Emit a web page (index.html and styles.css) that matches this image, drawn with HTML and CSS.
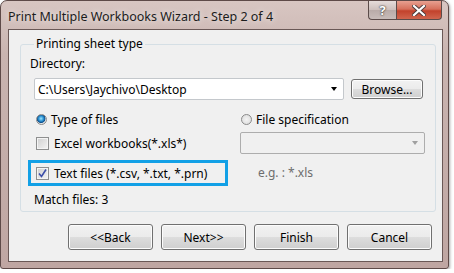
FILE: index.html
```html
<!DOCTYPE html>
<html lang="en">
<head>
  <meta charset="UTF-8">
  <title>Print Multiple Workbooks Wizard</title>
  <link rel="stylesheet" href="styles.css">
</head>
<body>
  <div class="window">
    <!-- Title bar -->
    <div class="titlebar">
      <span class="title">Print Multiple Workbooks Wizard - Step 2 of 4</span>
      <div class="caption-btns">
        <span class="cap-btn help">?</span>
        <span class="cap-btn close">
          <svg width="14" height="11" viewBox="0 0 14 11">
            <path d="M2 1 L12 10 M12 1 L2 10" stroke="#4a3a3a" stroke-width="4" stroke-linecap="square"/>
            <path d="M2 1 L12 10 M12 1 L2 10" stroke="#ffffff" stroke-width="2.2" stroke-linecap="square"/>
          </svg>
        </span>
      </div>
    </div>

    <!-- Client area -->
    <div class="client">
      <fieldset class="group">
        <legend>Printing sheet type</legend>
        <div class="label">Directory:</div>
        <div class="dir-row">
          <div class="combo">
            <span>C:\Users\Jaychivo\Desktop</span>
            <span class="arrow"></span>
          </div>
          <button class="btn browse">Browse...</button>
        </div>

        <div class="options">
          <label class="opt"><span class="radio checked"></span>Type of files</label>
          <label class="opt right"><span class="radio"></span>File specification</label>

          <label class="opt"><span class="check"></span>Excel workbooks(*.xls*)</label>
          <div class="combo disabled"><span class="fill"></span><span class="arrow"></span></div>

          <label class="opt highlight"><span class="check">
            <svg width="11" height="11" viewBox="0 0 11 11"><path d="M2 5.5 L4.5 8.5 L9 1.5" fill="none" stroke="#3c4ea8" stroke-width="1.6"/></svg>
          </span>Text files (*.csv, *.txt, *.prn)</label>
          <div class="hint">e.g. : *.xls</div>
        </div>

        <div class="match">Match files: 3</div>
      </fieldset>

      <div class="footer">
        <button class="btn">&lt;&lt;Back</button>
        <button class="btn">Next&gt;&gt;</button>
        <button class="btn">Finish</button>
        <button class="btn">Cancel</button>
      </div>
    </div>
  </div>
</body>
</html>
```

FILE: styles.css
```css
body {
  margin: 0;
  background: #ffffff;
  font-family: 'Noto Sans', 'Open Sans', sans-serif;
  font-size: 12px;
  color: #000;
}

.window {
  width: 449px;
  height: 269px;
  box-sizing: border-box;
  padding: 0 5px 6px 7px;
  border: 1px solid #5e4a48;
  border-radius: 7px 7px 3px 3px;
  background: linear-gradient(180deg, #d8c6c2 0%, #c9b4b0 20%, #bfa6a2 100%);
  box-shadow: 1px 1px 3px rgba(0, 0, 0, 0.35);
  display: flex;
  flex-direction: column;
}

.titlebar {
  height: 28px;
  display: flex;
  justify-content: space-between;
  align-items: flex-start;
}

.title {
  margin-top: 9px;
  line-height: 14px;
  font-size: 12.5px;
  color: #1c1c1c;
  text-shadow: 0 0 6px rgba(255, 255, 255, 0.9);
}

.caption-btns {
  display: flex;
  margin-right: 1px;
}

.cap-btn {
  height: 18px;
  border: 1px solid #5b4b49;
  border-top: none;
  display: flex;
  align-items: center;
  justify-content: center;
}

.help {
  width: 27px;
  border-radius: 0 0 0 4px;
  border-right: none;
  background: linear-gradient(180deg, #e6dcda 0%, #cdbfbc 50%, #b9aba8 51%, #c8bcb9 100%);
  color: #fff;
  font-weight: bold;
  font-size: 13px;
  text-shadow: 0 0 2px #333, 0 0 1px #333;
}

.close {
  width: 44px;
  border-radius: 0 0 4px 0;
  background: linear-gradient(180deg, #e8a090 0%, #d6705c 45%, #c2422c 55%, #d0654e 100%);
}

.client {
  flex: 1;
  border: 1px solid #6a5856;
  background: #f0f0f0;
  padding: 6px 11px 0 11px;
  display: flex;
  flex-direction: column;
}

.group {
  margin: 0;
  padding: 0 9px 5px 9px;
  border: 1px solid #d5dfe5;
  border-radius: 3px;
  height: 176px;
  box-sizing: border-box;
}

.group legend {
  padding: 0 2px;
  margin-left: 4px;
  line-height: 16px;
}

.label {
  margin-top: 4px;
  line-height: 16px;
}

.dir-row {
  display: flex;
  align-items: center;
  margin-top: 6px;
  margin-left: 4px;
}

.combo {
  width: 310px;
  height: 22px;
  box-sizing: border-box;
  border: 1px solid #c4c8cc;
  border-radius: 2px;
  background: #fff;
  display: flex;
  align-items: center;
  justify-content: space-between;
  padding: 0 6px 0 3px;
}

.arrow {
  width: 0;
  height: 0;
  border-left: 3.5px solid transparent;
  border-right: 3.5px solid transparent;
  border-top: 4px solid #000;
}

.combo.disabled {
  width: 185px;
  background: #f0f0f0;
  border-color: #adadad;
  padding: 2px 6px 2px 2px;
}

.combo.disabled .fill {
  align-self: stretch;
  width: 161px;
  background: #f0f0f0;
}

.combo.disabled .arrow {
  border-top-color: #a0a0a0;
}

.btn {
  font-family: inherit;
  font-size: 12px;
  color: #000;
  height: 20px;
  padding: 0;
  border: 1px solid #707070;
  border-radius: 3px;
  background: linear-gradient(180deg, #f2f2f2 0%, #ebebeb 50%, #dddddd 51%, #cfcfcf 100%);
  box-shadow: inset 0 0 0 1px #fcfcfc;
}

.browse {
  width: 72px;
  margin-left: 7px;
}

.options {
  display: grid;
  grid-template-columns: 210px 186px;
  grid-template-rows: 19px 22px 29px;
  row-gap: 3px;
  margin-top: 10px;
  align-items: center;
}

.opt {
  display: flex;
  align-items: center;
  gap: 3px;
  padding-left: 6px;
}

.opt.right {
  padding-left: 1px;
}

.radio {
  width: 11px;
  height: 11px;
  border-radius: 50%;
  border: 1px solid #8a8a8a;
  background: radial-gradient(circle, #f4f4f4 0%, #d8d8d8 100%);
  margin-right: 1px;
  box-sizing: border-box;
}

.radio.checked {
  background: radial-gradient(circle at 45% 40%, #9ee6ff 0%, #2a8fd0 35%, #0e4e8a 55%, #e8e8e8 65%, #d0d0d0 100%);
}

.check {
  width: 13px;
  height: 13px;
  box-sizing: border-box;
  border: 1px solid #8e8f8f;
  background: linear-gradient(135deg, #cfcfcf 0%, #f4f4f4 100%);
  box-shadow: inset 0 0 0 1px #f4f4f4;
  display: flex;
  align-items: center;
  justify-content: center;
  margin-right: 2px;
}

.highlight {
  align-self: end;
  margin-left: -2px;
  padding-left: 5px;
  width: 189px;
  height: 20px;
  border: 3px solid #12a0e6;
}

.hint {
  align-self: end;
  line-height: 26px;
  color: #6d6d6d;
  padding-left: 18px;
}

.match {
  margin-top: 6px;
  padding-left: 4px;
  line-height: 16px;
}

.footer {
  display: flex;
  justify-content: flex-end;
  gap: 8px;
  padding: 12px 0 0 0;
  margin-right: -1px;
}

.footer .btn {
  width: 85px;
  height: 26px;
}
```
